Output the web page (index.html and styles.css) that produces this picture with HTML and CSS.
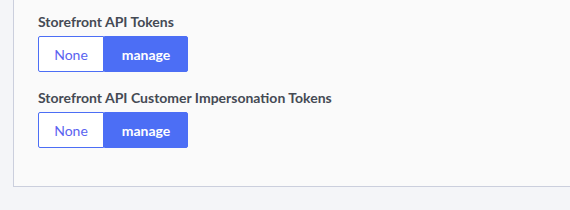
FILE: index.html
```html
<!DOCTYPE html>
<html>
<head>
<meta charset="utf-8">
<link rel="stylesheet" href="styles.css">
</head>
<body>
<div class="card">
  <div class="field">
    <div class="label">Storefront API Tokens</div>
    <div class="group">
      <button class="btn none">None</button>
      <button class="btn manage">manage</button>
    </div>
  </div>
  <div class="field">
    <div class="label">Storefront API Customer Impersonation Tokens</div>
    <div class="group">
      <button class="btn none">None</button>
      <button class="btn manage">manage</button>
    </div>
  </div>
</div>
</body>
</html>
```
FILE: styles.css
```css
html, body {
  margin: 0;
  padding: 0;
  background: #f4f5f8;
  font-family: "Lato", "Open Sans", sans-serif;
}
body {
  width: 570px;
  height: 210px;
  overflow: hidden;
}
.card {
  margin-left: 13px;
  margin-top: -10px;
  width: 557px;
  box-sizing: border-box;
  background: #fafafa;
  border: 1px solid #cbcfdd;
  border-right: none;
  padding: 22px 0 38px 24px;
  display: flex;
  flex-direction: column;
  gap: 17px;
}
.label {
  font-size: 14px;
  font-weight: 700;
  color: #454a54;
  line-height: 18px;
  margin-bottom: 5px;
}
.group {
  display: flex;
}
.btn {
  font-family: inherit;
  font-size: 14px;
  height: 36px;
  box-sizing: border-box;
  border: 1px solid #4c6ef5;
  margin: 0;
  padding: 0;
  cursor: pointer;
}
.none {
  width: 66px;
  background: #fff;
  color: #5b63f0;
  border-radius: 2px 0 0 2px;
}
.manage {
  width: 84px;
  background: #4c6ef5;
  color: #fff;
  font-weight: 700;
  border-radius: 0 2px 2px 0;
}
```
